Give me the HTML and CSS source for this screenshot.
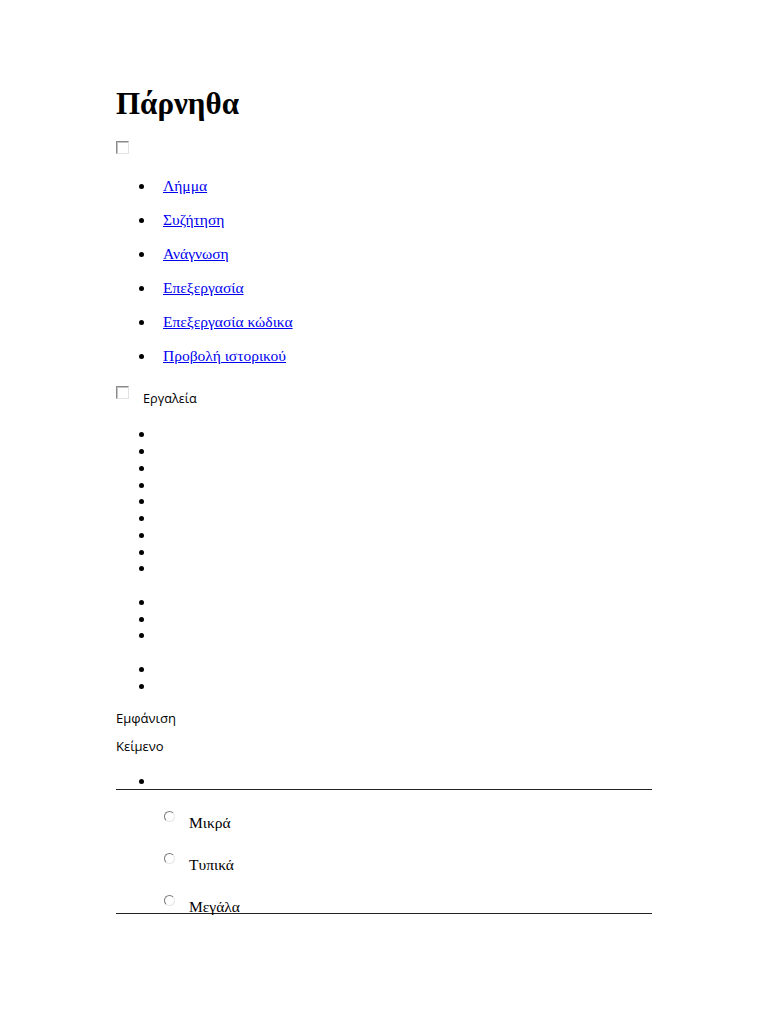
FILE: index.html
```html
<!DOCTYPE html>
<html lang="el">
<head>
<meta charset="utf-8">
<title>Πάρνηθα</title>
<link rel="stylesheet" href="styles.css">
</head>
<body>
<div class="page">
  <h1 class="title">Πάρνηθα</h1>
  <span class="chk chk-top"></span>
  <ul class="nav">
    <li><a href="#">Λήμμα</a></li>
    <li><a href="#">Συζήτηση</a></li>
    <li><a href="#">Ανάγνωση</a></li>
    <li><a href="#">Επεξεργασία</a></li>
    <li><a href="#">Επεξεργασία κώδικα</a></li>
    <li><a href="#">Προβολή ιστορικού</a></li>
  </ul>
  <div class="tools-head"><span class="chk"></span><span class="sans tools-label">Εργαλεία</span></div>
  <ul class="empty first">
    <li></li><li></li><li></li><li></li><li></li><li></li><li></li><li></li><li></li>
  </ul>
  <ul class="empty">
    <li></li><li></li><li></li>
  </ul>
  <ul class="empty">
    <li></li><li></li>
  </ul>
  <div class="sans label label-first">Εμφάνιση</div>
  <div class="sans label label-second">Κείμενο</div>
  <ul class="empty single">
    <li></li>
  </ul>
  <div class="box">
    <div class="radio-row"><span class="radio"></span><span class="radio-label">Μικρά</span></div>
    <div class="radio-row"><span class="radio"></span><span class="radio-label">Τυπικά</span></div>
    <div class="radio-row"><span class="radio"></span><span class="radio-label">Μεγάλα</span></div>
  </div>
</div>
</body>
</html>
```
FILE: styles.css
```css
html, body {
  margin: 0;
  padding: 0;
  background: #ffffff;
}

body {
  font-family: "Liberation Serif", "Times New Roman", serif;
  color: #000000;
}

.page {
  width: 536px;
  margin-left: 116px;
  padding-top: 87px;
  padding-bottom: 60px;
}

.title {
  margin: 0;
  font-size: 31px;
  line-height: 34px;
  font-weight: bold;
}

.chk {
  display: block;
  width: 13px;
  height: 13px;
  box-sizing: border-box;
  border: 1px solid;
  border-color: #8a8a8a #e2e2e2 #e2e2e2 #8a8a8a;
  box-shadow: inset 1px 1px 0 #c4c4c4;
  background: #ffffff;
  flex: none;
}

.chk-top {
  margin-top: 20px;
}

ul {
  list-style: none;
  margin: 0;
  padding: 0;
}

.nav {
  margin-top: 23px;
  display: flex;
  flex-direction: column;
  gap: 16px;
}

.nav li,
.empty li {
  display: flex;
  align-items: center;
}

.nav li {
  height: 18px;
  font-size: 15.5px;
  line-height: 18px;
}

.nav li::before,
.empty li::before {
  content: "";
  width: 5px;
  height: 5px;
  border-radius: 50%;
  background: #000000;
  margin-left: 23px;
  margin-right: 19px;
  flex: none;
}

.nav a {
  color: #0000ee;
  text-decoration: underline;
}

.tools-head {
  margin-top: 21px;
  display: flex;
  align-items: flex-start;
}

.sans {
  font-family: "Open Sans", "Noto Sans", sans-serif;
  font-size: 13px;
  line-height: 20px;
}

.tools-label {
  margin-left: 14px;
  padding-top: 2px;
  font-size: 12.7px;
}

.empty {
  margin-top: 16.75px;
}

.empty.first {
  margin-top: 18.6px;
}

.empty li {
  height: 16.75px;
}

.label-first {
  margin-top: 13px;
}

.label-second {
  margin-top: 8.7px;
}

.empty.single {
  margin-top: 18px;
}

.empty.single li {
  height: 15px;
}

.box {
  box-sizing: border-box;
  height: 125px;
  border-top: 1px solid #222222;
  border-bottom: 1px solid #222222;
  padding-top: 22px;
  padding-left: 48px;
  display: flex;
  flex-direction: column;
  gap: 22px;
}

.radio-row {
  display: flex;
  align-items: flex-start;
  height: 20px;
}

.radio {
  width: 11px;
  height: 11px;
  box-sizing: border-box;
  border-radius: 50%;
  border: 1.5px solid;
  border-color: #7a7a7a #e6e6e6 #e6e6e6 #7a7a7a;
  background: #ffffff;
  flex: none;
  margin-top: -1px;
}

.radio-label {
  margin-left: 14px;
  padding-top: 2px;
  font-size: 15.5px;
  line-height: 18px;
}
```
